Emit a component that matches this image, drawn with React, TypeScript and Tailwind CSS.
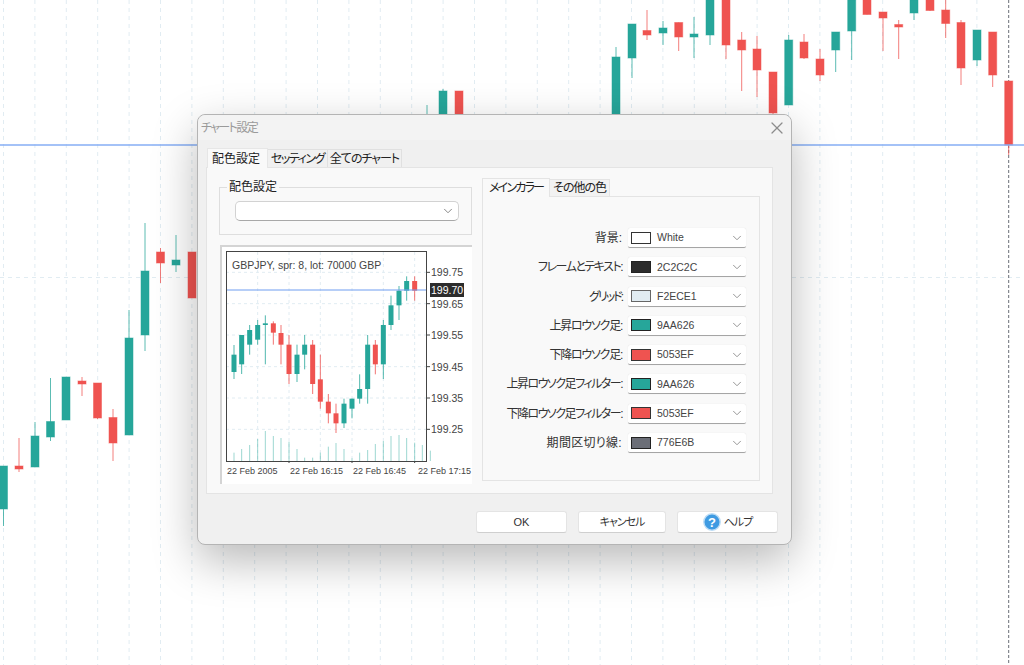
import React from 'react';
import { ChevronDown, X } from 'lucide-react';

const GREEN = '#26a69a';
const RED = '#ef5350';

// x, wick top, body top, body bottom, wick bottom, up?
type Candle = [number, number, number, number, number, boolean];

const bigCandles: Candle[] = [
    [3.5, 466, 466, 509, 526, true],
    [19, 438, 466, 469, 472, false],
    [35, 422, 436, 467, 467, true],
    [50.5, 378, 421.5, 437, 441, true],
    [66, 377, 377, 420, 420, true],
    [82, 377, 381, 384, 396, false],
    [97.5, 383, 383, 418, 419, false],
    [113, 409, 417.5, 443, 461, false],
    [129, 310, 338, 435, 435, true],
    [145, 223, 271, 335, 351, true],
    [160.5, 248, 252, 263, 283, false],
    [176, 235, 260, 265, 272, true],
    [192, 252, 252, 298, 298, false],
    [427, 105, 130, 130, 130, true],
    [443, 89, 91, 130, 130, true],
    [459, 91, 91, 130, 130, false],
    [616, 47, 57, 130, 130, true],
    [632, 24, 24, 58, 78, true],
    [647, 10, 30.5, 35, 40, false],
    [663, 21, 28, 33, 45, true],
    [678.7, 22.5, 22.5, 37, 51, false],
    [694, 17, 34, 37, 58, true],
    [710, 0, 0, 35, 45, true],
    [726, 0, 0, 45, 59, false],
    [741.7, 32, 40, 50, 91, false],
    [757, 36, 49, 70, 97, false],
    [773, 72, 72, 113, 130, false],
    [788.7, 35, 40, 105, 105, true],
    [804, 34, 42, 58, 59, false],
    [820, 49, 59, 75, 81, false],
    [835.7, 32, 32, 50, 72, true],
    [851.7, 0, 0, 31, 60, true],
    [867, 0, 0, 14.5, 14.5, false],
    [883, 12, 12, 18, 51, false],
    [898.7, 20, 24.5, 27, 59, false],
    [914, 0, 0, 13, 20, true],
    [930, 0, 0, 10.5, 11, false],
    [945.7, 0, 10, 23.5, 38, false],
    [961, 20, 22.5, 68, 85, false],
    [977, 30, 30, 60, 66, true],
    [992.7, 32, 32, 75, 87, false],
    [1008.7, 81, 81, 145, 155, false],
];

// preview chart, in 3x zoom coordinates
const smallCandles: Candle[] = [
    [57, 315, 344, 396, 417, true],
    [80, 285, 285, 373, 402, true],
    [104, 255, 270, 314, 344, true],
    [128, 240, 255, 299, 314, true],
    [151, 226, 250, 255, 373, true],
    [175, 244, 250, 278, 314, false],
    [198, 255, 279, 314, 373, false],
    [222, 285, 314, 402, 432, false],
    [246, 314, 344, 402, 426, true],
    [269, 285, 314, 344, 388, true],
    [293, 300, 314, 432, 462, false],
    [316, 344, 418, 485, 506, false],
    [340, 462, 485, 520, 550, false],
    [363, 491, 520, 550, 579, false],
    [387, 476, 491, 550, 564, true],
    [411, 476, 476, 506, 535, true],
    [434, 403, 447, 476, 491, true],
    [458, 285, 314, 447, 491, true],
    [481, 300, 314, 373, 403, false],
    [505, 240, 255, 373, 417, true],
    [528, 167, 196, 255, 270, true],
    [552, 138, 152, 196, 240, true],
    [575, 109, 123, 152, 182, true],
    [599, 109, 123, 152, 182, false],
];

const volumes = [
    [57, 638], [80, 627], [104, 615], [128, 597], [151, 573], [175, 588], [198, 594], [222, 605], [246, 627],
    [269, 653], [293, 653], [316, 638], [340, 620], [363, 609], [387, 627], [411, 655], [434, 638], [458, 630],
    [481, 612], [505, 603], [528, 588], [552, 585], [575, 594], [599, 608], [622, 615], [646, 632],
];

const colorRows = [
    { label: '背景:', name: 'White', color: '#ffffff', frame: '#333333', fit: 'tracking-normal' },
    { label: 'フレームとテキスト:', name: '2C2C2C', color: '#2c2c2c', frame: '#222222', fit: 'tracking-[-1.5px]' },
    { label: 'グリッド:', name: 'F2ECE1', color: '#e1ecf2', frame: '#666666', fit: 'tracking-[-2px]' },
    { label: '上昇ロウソク足:', name: '9AA626', color: '#26a69a', frame: '#222222', fit: 'tracking-[-1.25px]' },
    { label: '下降ロウソク足:', name: '5053EF', color: '#ef5350', frame: '#333333', fit: 'tracking-[-1.25px]' },
    { label: '上昇ロウソク足フィルター:', name: '9AA626', color: '#26a69a', frame: '#222222', fit: 'tracking-[-1.5px]' },
    { label: '下降ロウソク足フィルター:', name: '5053EF', color: '#ef5350', frame: '#333333', fit: 'tracking-[-1.5px]' },
    { label: '期間区切り線:', name: '776E6B', color: '#6b6e77', frame: '#222222', fit: 'tracking-[0.3px]' },
];

const priceLabels = [
    ['199.75', 97],
    ['199.65', 191],
    ['199.55', 285],
    ['199.45', 380],
    ['199.35', 474],
    ['199.25', 568],
] as const;

const BackgroundChart = () => (
    <svg className="absolute inset-0" width={1024} height={665}>
        {Array.from({ length: 32 }, (_, i) => (
            <line key={i} x1={3.5 + 31.4 * i} x2={3.5 + 31.4 * i} y1={0} y2={665} stroke="#e1ecf2" strokeDasharray="4 4" />
        ))}
        <line x1={0} x2={1024} y1={277.5} y2={277.5} stroke="#e1ecf2" strokeDasharray="4 4" />
        <line x1={1008.7} x2={1008.7} y1={0} y2={665} stroke="#6b6e77" strokeDasharray="3 2" />
        {bigCandles.map(([x, wt, bt, bb, wb, up]) => {
            const c = up ? GREEN : RED;
            return (
                <g key={x}>
                    <line x1={x} x2={x} y1={wt} y2={wb} stroke={c} strokeOpacity={0.75} />
                    <rect x={x - 4} y={bt} width={8} height={bb - bt} fill={c} stroke={c} strokeOpacity={0.5} />
                </g>
            );
        })}
        <line x1={0} x2={1024} y1={145} y2={145} stroke="#86aef5" strokeWidth={1.4} />
    </svg>
);

const PreviewChart = () => {
    // zoom coords to local svg coords
    const px = (v: number) => v / 3 - 7;
    const py = (v: number) => v / 3 - 7;
    const bottom = py(663);
    return (
        <svg width={250} height={237} className="block" fontFamily="'Liberation Sans', sans-serif" fontSize={10.5} fill="#444">
            {[128, 222, 316, 411, 505, 599].map((x) => (
                <line key={x} x1={px(x)} x2={px(x)} y1={5} y2={bottom} stroke="#e1ecf2" strokeDasharray="3 3" />
            ))}
            {priceLabels.map(([, y]) => (
                <line key={y} x1={4} x2={205} y1={py(y)} y2={py(y)} stroke="#e1ecf2" strokeDasharray="3 3" />
            ))}
            {volumes.map(([x, top]) => (
                <line key={x} x1={px(x)} x2={px(x)} y1={py(top)} y2={bottom} stroke={GREEN} strokeOpacity={0.45} />
            ))}
            {smallCandles.map(([x, wt, bt, bb, wb, up]) => {
                const c = up ? GREEN : RED;
                return (
                    <g key={x}>
                        <line x1={px(x)} x2={px(x)} y1={py(wt)} y2={py(wb)} stroke={c} strokeOpacity={0.8} />
                        <rect x={px(x) - 2.5} y={py(bt)} width={5} height={py(bb) - py(bt)} fill={c} />
                    </g>
                );
            })}
            <line x1={4} x2={205} y1={43} y2={43} stroke="#6f9df0" />
            <rect x={4.5} y={4.5} width={200} height={210} fill="none" stroke="#444" />
            <text x={10} y={22}>GBPJPY, spr: 8, lot: 70000 GBP</text>
            {priceLabels.map(([label, y]) => (
                <g key={label}>
                    <line x1={205} x2={208} y1={py(y)} y2={py(y)} stroke="#444" />
                    <text x={209} y={py(y) + 4}>{label}</text>
                </g>
            ))}
            <rect x={208} y={36} width={34} height={14} fill="#2c2c2c" />
            <text x={209} y={47} fill="#fff">199.70</text>
            {[222, 411, 599].map((x) => (
                <line key={x} x1={px(x)} x2={px(x)} y1={bottom} y2={bottom + 2} stroke="#444" />
            ))}
            <text x={5} y={227} fontSize={9}>22 Feb 2005</text>
            <text x={68} y={227} fontSize={9}>22 Feb 16:15</text>
            <text x={131} y={227} fontSize={9}>22 Feb 16:45</text>
            <text x={196} y={227} fontSize={9}>22 Feb 17:15</text>
        </svg>
    );
};

const ColorRow = ({ label, name, color, frame, fit }: (typeof colorRows)[number]) => (
    <div className="flex items-center justify-end h-[20px]">
        <span className={`${fit} text-[12px] leading-none text-[#333] whitespace-nowrap`}>{label}</span>
        <div className="ml-[6px] mr-[13px] w-[118px] h-[20px] shrink-0 flex items-center bg-white rounded-[2px] border-b border-[#a5a5a5] shadow-[0_0_1px_rgba(0,0,0,0.15)]">
            <span className="ml-[3px] w-[20px] h-[12px] border" style={{ backgroundColor: color, borderColor: frame }} />
            <span className="ml-[6px] text-[10.5px] leading-none text-[#444] flex-1">{name}</span>
            <ChevronDown className="mr-[2px] w-[14px] h-[14px] text-[#888]" strokeWidth={1.5} />
        </div>
    </div>
);

const FooterButton = ({ width, children }: { width: string; children: React.ReactNode }) => (
    <button className={`${width} h-[22px] flex items-center justify-center gap-[3px] bg-white rounded-[3px] border border-[#e4e4e4] border-b-[#cfcfcf] text-[11px] text-[#333]`}>
        {children}
    </button>
);

export default function App() {
    return (
        <div className="relative w-[1024px] h-[665px] overflow-hidden bg-white font-['Liberation_Sans','Noto_Sans_CJK_JP',sans-serif]">
            <BackgroundChart />

            {/* Dialog */}
            <div className="absolute left-[197px] top-[114px] w-[595px] h-[431px] flex flex-col bg-[#f0f0f0] rounded-[8px] border border-[#b4b4b4] shadow-[0_16px_45px_rgba(0,0,0,0.28)] [font-feature-settings:'palt']">
                <div className="h-[25px] flex items-center justify-between pl-[3px] pr-[4px] rounded-t-[8px] bg-[#f3f3f3] shrink-0">
                    <span className="text-[12px] text-[#9a9a9a] whitespace-nowrap tracking-[-1.6px]">チャート設定</span>
                    <X className="w-[20px] h-[20px] text-[#8c8c8c]" strokeWidth={1.5} />
                </div>

                {/* Top tabs */}
                <div className="mt-[7px] ml-[9px] h-[20px] flex items-end text-[12px] leading-none text-[#222] whitespace-nowrap shrink-0">
                    <div className="w-[61px] h-[20px] pr-[3px] flex items-center justify-center bg-[#f9f9f9] border border-b-0 border-[#e6e6e6] relative top-[1px]">配色設定</div>
                    <div className="w-[60px] h-[18px] flex items-center justify-center border-t border-r border-[#e0e0e0] tracking-[-1.4px]">セッティング</div>
                    <div className="w-[74px] h-[18px] flex items-center justify-center border-t border-r border-[#e0e0e0] tracking-[-1px]">全てのチャート</div>
                </div>

                {/* Page */}
                <div className="ml-[8px] w-[567px] h-[327px] flex bg-[#f9f9f9] border border-[#e4e4e4] shrink-0">
                    <div className="ml-[12px] w-[253px] flex flex-col">
                        <div className="relative mt-[19px] h-[48px] border border-[#dedede] shrink-0">
                            <span className="absolute left-[7px] top-[-8px] px-[2px] bg-[#f9f9f9] text-[12px] leading-[14px] text-[#222]">配色設定</span>
                            <div className="ml-[15px] mt-[13px] w-[224px] h-[20px] flex items-center justify-end pr-[3px] bg-white rounded-[5px] border border-[#d2d2d2] border-b-[#a8a8a8]">
                                <ChevronDown className="w-[14px] h-[14px] text-[#777]" strokeWidth={1.5} />
                            </div>
                        </div>
                        <div className="mt-[10px] ml-[1px] h-[239px] bg-white border-t-2 border-l-2 border-[#d4d4d4] overflow-hidden shrink-0">
                            <PreviewChart />
                        </div>
                    </div>

                    <div className="ml-[10px] w-[278px] flex flex-col">
                        <div className="mt-[9px] h-[19px] flex items-end text-[12px] leading-none text-[#222] whitespace-nowrap shrink-0">
                            <div className="w-[68px] h-[19px] flex items-center justify-center bg-[#f9f9f9] border border-b-0 border-[#e4e4e4] relative top-[1px] tracking-[-1.8px]">メインカラー</div>
                            <div className="w-[60px] h-[17px] flex items-center justify-center bg-[#f2f2f2] border-t border-r border-[#e4e4e4] tracking-[-1px]">その他の色</div>
                        </div>
                        <div className="h-[285px] pt-[31px] flex flex-col gap-[9.3px] border border-[#e4e4e4] shrink-0">
                            {colorRows.map((row) => (
                                <ColorRow key={row.label} {...row} />
                            ))}
                        </div>
                    </div>
                </div>

                {/* Footer */}
                <div className="mt-[17px] ml-[278px] flex gap-[11px]">
                    <FooterButton width="w-[91px]">OK</FooterButton>
                    <FooterButton width="w-[88px]"><span className="tracking-[-1px]">キャンセル</span></FooterButton>
                    <FooterButton width="w-[101px]">
                        <svg width={18} height={18} viewBox="0 0 18 18">
                            <circle cx={9} cy={9} r={8.2} fill="#3f9be2" stroke="#bcdcf5" strokeWidth={1.4} />
                            <text x={9} y={13.5} textAnchor="middle" fontSize={13} fontWeight={700} fill="#fff" fontFamily="'Liberation Sans', sans-serif">?</text>
                        </svg>
                        <span className="tracking-[-1px]">ヘルプ</span>
                    </FooterButton>
                </div>
            </div>
        </div>
    );
}
